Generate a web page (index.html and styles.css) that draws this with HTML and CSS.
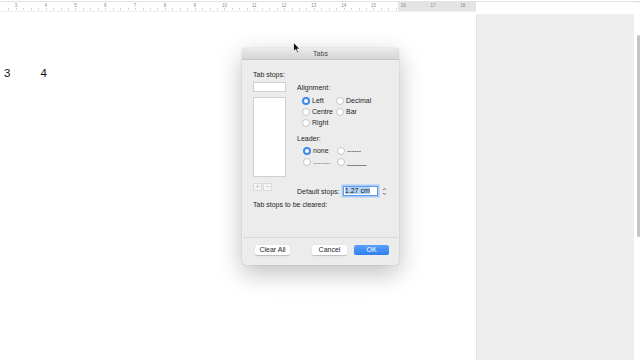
FILE: index.html
```html
<!DOCTYPE html>
<html lang="en">
  <head>
    <meta charset="UTF-8" />
    <title>Tabs</title>
    <link rel="stylesheet" href="styles.css">
  </head>
  <body>
    <div class="app">
      <div class="topLine"></div>
      <div class="main">
        <div class="docColumn">
          <div class="ruler">
            <div class="rulerMargin"></div>
            <div class="rulerNumbers">
              <span>3</span><span>4</span><span>5</span><span>6</span>
              <span>7</span><span>8</span><span>9</span><span>10</span>
              <span>11</span><span>12</span><span>13</span><span>14</span>
              <span>15</span><span>16</span><span>17</span><span>18</span>
            </div>
          </div>
          <div class="docPage">
            <span class="docNum">3</span>
            <span class="docNum">4</span>
          </div>
        </div>
        <div class="sidePane"></div>
        <div class="scrollStrip">
          <div class="scrollThumb"></div>
        </div>
      </div>

      <div class="dialog">
        <div class="titleBar">Tabs</div>
        <div class="dialogBody">
          <div class="topSection">
            <div class="leftCol">
              <span class="label">Tab stops:</span>
              <div class="field stopField"></div>
              <div class="field stopList"></div>
              <div class="plusMinus">
                <div class="pmBtn">+</div>
                <div class="pmBtn">&minus;</div>
              </div>
            </div>
            <div class="rightCol">
              <span class="label alignLabel">Alignment:</span>
              <div class="radioGrid">
                <div class="radioItem"><span class="radio on"></span>Left</div>
                <div class="radioItem"><span class="radio"></span>Decimal</div>
                <div class="radioItem"><span class="radio"></span>Centre</div>
                <div class="radioItem"><span class="radio"></span>Bar</div>
                <div class="radioItem"><span class="radio"></span>Right</div>
              </div>
              <span class="label leaderLabel">Leader:</span>
              <div class="radioGrid leaderGrid">
                <div class="radioItem"><span class="radio on"></span>none</div>
                <div class="radioItem"><span class="radio"></span>------</div>
                <div class="radioItem"><span class="radio"></span>.........</div>
                <div class="radioItem"><span class="radio"></span>_____</div>
              </div>
              <div class="stopsRow">
                <span class="label">Default stops:</span>
                <div class="stopsInput"><span class="sel">1.27 cm</span></div>
                <div class="stepper">
                  <svg width="5" height="9" viewBox="0 0 5 9">
                    <path d="M1 3 L2.5 1.5 L4 3" fill="none" stroke="#555" stroke-width="0.8"/>
                    <path d="M1 6 L2.5 7.5 L4 6" fill="none" stroke="#555" stroke-width="0.8"/>
                  </svg>
                </div>
              </div>
            </div>
          </div>
          <span class="label clearedLabel">Tab stops to be cleared:</span>
          <div class="spacer"></div>
          <div class="separator"></div>
          <div class="buttonBar">
            <button class="btn">Clear All</button>
            <div class="spacer"></div>
            <button class="btn">Cancel</button>
            <button class="btn okBtn">OK</button>
          </div>
        </div>
      </div>

      <svg class="cursor" width="8" height="12" viewBox="0 0 8 12">
        <path d="M0.5 0.5 L0.5 9.5 L2.7 7.5 L4.3 11 L5.6 10.4 L4.1 7 L7 7 Z" fill="#111" stroke="#fff" stroke-width="0.8"/>
      </svg>
    </div>
  </body>
</html>
```

FILE: styles.css
```css
body {
  margin: 0;
  background-color: #ffffff;
  font-family: "Liberation Sans", "Helvetica", sans-serif;
  overflow: hidden;
}
.app {
  position: relative;
  width: 640px;
  height: 360px;
  padding-top: 1px;
  box-sizing: border-box;
}
.topLine {
  height: 1px;
  background-color: #e2e2e2;
}
.main {
  display: flex;
  height: 358px;
}
.docColumn {
  width: 476px;
  display: flex;
  flex-direction: column;
}
.ruler {
  position: relative;
  height: 9px;
  border-bottom: 1px solid #f0f0f0;
  background-image: repeating-linear-gradient(
    to right,
    transparent 0px,
    transparent 6.45px,
    #d4d4d4 6.45px,
    #d4d4d4 7.45px
  );
  background-size: 100% 2px;
  background-position: 2px 6px;
  background-repeat: repeat-x;
}
.rulerMargin {
  position: absolute;
  left: 398px;
  top: 0px;
  width: 78px;
  height: 9px;
  background-color: #e4e4e4;
}
.rulerNumbers {
  position: relative;
  display: flex;
  margin-left: 1px;
  font-size: 4.5px;
  color: #8a8a8a;
  line-height: 7px;
}
.rulerNumbers > span {
  width: 29.8px;
  flex-shrink: 0;
  text-align: center;
}
.docPage {
  flex-grow: 1;
  padding: 55px 0px 0px 4px;
  display: flex;
  gap: 30px;
}
.docNum {
  font-size: 11.5px;
  line-height: 12px;
  color: #111111;
}
.sidePane {
  width: 157px;
  margin-top: 12px;
  background-color: #eeeeee;
  border-left: 1px solid #e4e4e4;
}
.scrollStrip {
  flex-grow: 1;
  padding: 32px 0px 0px 3px;
  border-top: 1px solid #f0f0f0;
}
.scrollThumb {
  width: 3px;
  height: 202px;
  border-radius: 2px;
  background-color: #c4c4c4;
}

/* floating dialog window */
.dialog {
  position: absolute;
  left: 242px;
  top: 48px;
  width: 157px;
  height: 217px;
  border-radius: 4px;
  overflow: hidden;
  display: flex;
  flex-direction: column;
  background-color: #ececec;
  box-shadow: 0px 8px 24px rgba(0, 0, 0, 0.26), 0px 0px 1px rgba(0, 0, 0, 0.35);
}
.titleBar {
  height: 11px;
  line-height: 11px;
  text-align: center;
  font-size: 7px;
  color: #4a4a4a;
  background: linear-gradient(#ebebeb, #d5d5d5);
  border-bottom: 1px solid #c4c4c4;
}
.dialogBody {
  flex-grow: 1;
  display: flex;
  flex-direction: column;
  padding: 10px 10px 10px 11px;
}
.label {
  font-size: 7px;
  line-height: 9px;
  color: #262626;
  white-space: nowrap;
}
.topSection {
  display: flex;
  gap: 11px;
}
.leftCol {
  width: 33px;
  display: flex;
  flex-direction: column;
}
.field {
  background-color: #ffffff;
  border: 1px solid #cfcfcf;
  box-sizing: border-box;
}
.stopField {
  height: 10px;
  margin-top: 3px;
}
.stopList {
  height: 80px;
  margin-top: 5px;
}
.plusMinus {
  display: flex;
  margin-top: 6px;
}
.pmBtn {
  width: 9px;
  height: 8px;
  margin-right: 1px;
  background-color: #f4f4f4;
  border: 1px solid #dadada;
  box-sizing: border-box;
  font-size: 7px;
  line-height: 6px;
  text-align: center;
  color: #b8b8b8;
}
.rightCol {
  flex-grow: 1;
  display: flex;
  flex-direction: column;
}
.alignLabel {
  margin-top: 13px;
}
.radioGrid {
  display: grid;
  grid-template-columns: 34px auto;
  grid-auto-rows: 11px;
  margin-left: 5px;
  margin-top: 3px;
}
.leaderGrid {
  margin-left: 6px;
  margin-top: 2px;
}
.radioItem {
  display: flex;
  align-items: center;
  gap: 2px;
  font-size: 7px;
  color: #262626;
}
.radio {
  width: 8px;
  height: 8px;
  border-radius: 50%;
  background-color: #ffffff;
  border: 1px solid #c6c6c6;
  box-sizing: border-box;
}
.radio.on {
  background-color: #ffffff;
  border: 2.4px solid #3c89f0;
}
.leaderLabel {
  margin-top: 6px;
}
.stopsRow {
  display: flex;
  align-items: center;
  margin-top: 19px;
}
.stopsInput {
  width: 35px;
  height: 10px;
  margin-left: 3px;
  box-sizing: border-box;
  background-color: #ffffff;
  border: 1px solid #5b9cf0;
  box-shadow: 0px 0px 0px 1.5px #a9c9f7;
  font-size: 7px;
  line-height: 8px;
  padding-left: 1px;
  color: #111111;
}
.sel {
  background-color: #b4d3fb;
}
.stepper {
  margin-left: 4px;
  display: flex;
}
.clearedLabel {
  margin-top: 4px;
}
.spacer {
  flex-grow: 1;
}
.separator {
  height: 1px;
  margin: 0px -9px 0px -10px;
  background-color: #d9d9d9;
}
.buttonBar {
  display: flex;
  gap: 7px;
  margin-top: 7px;
  padding-left: 2px;
}
button.btn {
  width: 35px;
  height: 10px;
  padding: 0px;
  border: none;
  border-radius: 2px;
  background-color: #ffffff;
  box-shadow: 0px 0.5px 1px rgba(0, 0, 0, 0.2);
  font-family: "Liberation Sans", "Helvetica", sans-serif;
  font-size: 7px;
  line-height: 10px;
  color: #262626;
}
button.btn.okBtn {
  background: linear-gradient(#5aa0fb, #2f7ff0);
  color: #ffffff;
  box-shadow: none;
}
.cursor {
  position: absolute;
  left: 293px;
  top: 42px;
}
```
